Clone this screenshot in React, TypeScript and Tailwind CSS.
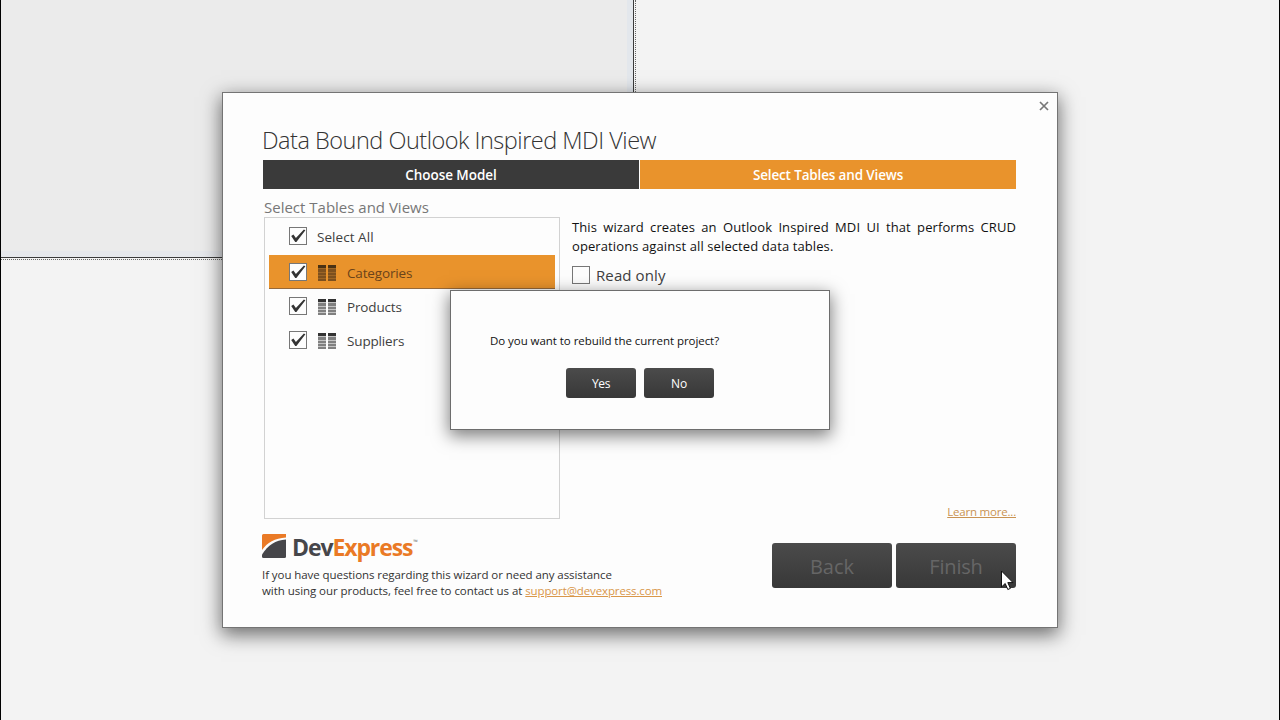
import type { ReactNode } from 'react';

const tables = [
    { name: 'Categories', selected: true },
    { name: 'Products', selected: false },
    { name: 'Suppliers', selected: false },
];

function CheckBox({ checked = false }: { checked?: boolean }) {
    return (
        <span className="block w-[18px] h-[18px] shrink-0 border border-[#777777] bg-[#fdfdfd]">
            {checked && (
                <svg className="block w-4 h-4" viewBox="0 0 16 16" fill="none">
                    <path d="M1.2 8 L3.4 6.6 L5.9 10 L13.9 1.4 L15.4 2.2 L6.4 14 L5.2 14 Z" fill="#333333" />
                </svg>
            )}
        </span>
    );
}

function TableIcon({ selected }: { selected: boolean }) {
    const head = selected ? '#4a3214' : '#333333';
    const cell = selected ? '#7d501e' : '#808080';
    const gap = selected ? '#9c6526' : '#c4c4c4';
    return (
        <svg className="block w-[19px] h-4 shrink-0" viewBox="0 0 19 16" shapeRendering="crispEdges">
            {[1, 11].map((x) => (
                <g key={x}>
                    <rect x={x} y="0" width="8" height="16" fill={gap} />
                    <rect x={x} y="0" width="8" height="3" fill={head} />
                    <rect x={x} y="4" width="8" height="3" fill={cell} />
                    <rect x={x} y="8" width="8" height="2" fill={cell} />
                    <rect x={x} y="11" width="8" height="2" fill={cell} />
                    <rect x={x} y="14" width="8" height="2" fill={cell} />
                </g>
            ))}
        </svg>
    );
}

function Button({ className, children }: { className: string; children: ReactNode }) {
    return (
        <button className={`flex items-center justify-center rounded-[3px] bg-linear-to-b from-[#4b4b4b] to-[#383838] ${className}`}>
            {children}
        </button>
    );
}

function Logo() {
    return (
        <div className="flex items-center h-[26px]">
            <svg className="w-6 h-6 shrink-0" viewBox="0 0 24 24">
                <path d="M1.5 0 H24 V3.4 C13 4 5 8.6 0 16 V1.5 Q0 0 1.5 0 Z" fill="#ea7a26" />
                <path d="M24 5.4 V22.5 Q24 24 22.5 24 H1.5 Q0 24 0 22.5 V20.4 C6 11 13.5 6.2 24 5.4 Z" fill="#46464a" />
            </svg>
            <span className="ml-1.5 pt-0.5 text-[23px] leading-[26px] font-bold tracking-[-1.1px] text-[#46464a]">
                Dev<span className="text-[#ea7a26]">Express</span>
            </span>
            <span className="ml-px mb-2 text-[6px] leading-none text-[#777777]">™</span>
        </div>
    );
}

// Editor panes behind the wizard
function Backdrop() {
    return (
        <div className="flex h-full border-x border-black">
            <div className="flex flex-col w-[633px] h-[258px] border-r border-b border-[#3a3a3a] bg-[#ebebeb]">
                <div className="flex flex-1">
                    <div className="flex-1" />
                    <div className="w-1.5 bg-[#e3e7ec]" />
                </div>
                <div className="h-1.5 bg-[#e6e8ec]" />
            </div>
            <div className="-ml-[633px] w-[635px] h-[260px] border-r border-b border-dotted border-[#666666]" />
        </div>
    );
}

function Message() {
    return (
        <div className="absolute left-[450px] top-[290px] w-[380px] h-[140px] pt-[40px] border border-[#6d6d6d] bg-[#fdfdfd] shadow-[0_5px_16px_1px_rgba(0,0,0,0.5)]">
            <p className="pl-[39px] text-[11.5px] leading-5 tracking-[-0.05px] text-[#111111]">Do you want to rebuild the current project?</p>
            <div className="flex justify-center gap-2 mt-[17px]">
                <Button className="w-[70px] h-[30px] pt-0.5 text-[12px] tracking-[-0.4px] text-white">Yes</Button>
                <Button className="w-[70px] h-[30px] pt-0.5 text-[12px] tracking-[-0.2px] text-white">No</Button>
            </div>
        </div>
    );
}

function Wizard() {
    return (
        <div className="absolute left-[222px] top-[92px] w-[836px] h-[536px] pl-[40px] pr-[41px] pt-[30px] border border-[#747474] bg-[#fdfdfd] shadow-[0_6px_18px_1px_rgba(0,0,0,0.55)]">
            <svg className="absolute right-[8px] top-[8px] w-[10px] h-[10px]" viewBox="0 0 10 10" stroke="#777777" strokeWidth="1.7">
                <path d="M1 1 L9 9 M9 1 L1 9" />
            </svg>

            <h1 className="-ml-px h-[37px] text-[23.5px] leading-[34px] font-light tracking-[-0.49px] whitespace-nowrap text-[#333333]">
                Data Bound Outlook Inspired MDI View
            </h1>

            <div className="flex gap-px h-[29px] text-[13.5px] leading-[30px] font-semibold text-center text-white">
                <div className="flex-1 bg-[#3a3a3a] tracking-[-0.05px]">Choose Model</div>
                <div className="flex-1 bg-[#e9932c] tracking-[-0.15px]">Select Tables and Views</div>
            </div>

            <div className="flex h-[330px]">
                <div className="ml-px w-[296px]">
                    <p className="h-[28px] pt-[7px] text-[15px] leading-[23px] text-[#777777]">Select Tables and Views</p>
                    <div className="h-[302px] px-1 pt-[8px] border border-[#d2d2d2]">
                        <div className="flex items-center gap-[10px] h-5 pl-5 text-[13.5px] tracking-[0.05px] text-[#404040]">
                            <CheckBox checked />
                            <span className="pt-[2px]">Select All</span>
                        </div>
                        <ul className="mt-[9px] text-[13.5px] tracking-[-0.15px]">
                            {tables.map((t) => (
                                <li
                                    key={t.name}
                                    className={`flex items-center h-[34px] pl-5 pt-px border-b ${t.selected ? 'bg-[#e9932c] border-[#96693a] text-[#6b431a]' : 'border-transparent text-[#404040]'}`}
                                >
                                    <CheckBox checked />
                                    <span className="ml-2.5 pt-px"><TableIcon selected={t.selected} /></span>
                                    <span className="ml-[11px] pt-[2px]">{t.name}</span>
                                </li>
                            ))}
                        </ul>
                    </div>
                </div>

                <div className="flex flex-col flex-1 pl-3 pt-[29px]">
                    <p className="text-[13px] leading-[19px] tracking-[0.1px] text-justify text-[#111111]">
                        This wizard creates an Outlook Inspired MDI UI that performs CRUD operations against all selected data tables.
                    </p>
                    <div className="flex items-center gap-1.5 mt-[9px] text-[15px] leading-5 tracking-[0.1px] text-[#404040]">
                        <CheckBox />
                        <span>Read only</span>
                    </div>
                    <a className="mt-auto -mb-px self-end text-[11.5px] leading-4 tracking-[-0.2px] underline text-[#c99352]">Learn more...</a>
                </div>
            </div>

            <div className="flex justify-between -ml-px">
                <div className="pt-[14px] text-[11.5px] leading-4 tracking-[-0.07px] whitespace-nowrap text-[#333333]">
                    <Logo />
                    <p className="mt-[8px]">If you have questions regarding this wizard or need any assistance</p>
                    <p className="tracking-[-0.05px]">
                        with using our products, feel free to contact us at <a className="tracking-[-0.13px] underline text-[#d9974a]">support@devexpress.com</a>
                    </p>
                </div>
                <div className="flex gap-1 pt-6">
                    <Button className="w-[120px] h-[45px] pt-0.5 text-[20px] text-[#666666]">Back</Button>
                    <Button className="w-[120px] h-[45px] pt-0.5 text-[20px] tracking-[-0.2px] text-[#666666]">Finish</Button>
                </div>
            </div>
        </div>
    );
}

export default function App() {
    return (
        <div className="relative w-[1280px] h-[720px] overflow-hidden bg-[#f3f3f3] font-['Open_Sans','Noto_Sans',sans-serif]">
            <Backdrop />
            <Wizard />
            <Message />
            <svg className="absolute left-[1001px] top-[570px] w-[13px] h-[21px]" viewBox="0 0 13 21">
                <path d="M0.5 1 V17 L4.2 13.5 L6.8 19.5 L9.4 18.4 L6.8 12.6 H12 Z" fill="#ffffff" stroke="#111111" strokeWidth="1" />
            </svg>
        </div>
    );
}
